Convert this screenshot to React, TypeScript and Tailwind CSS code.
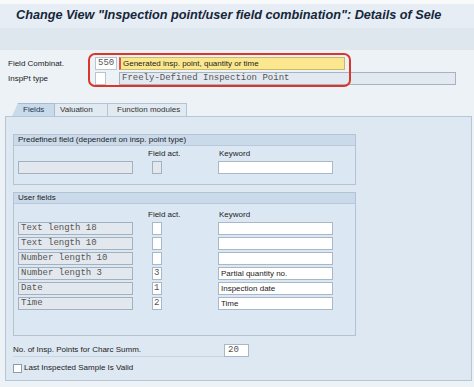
import React from "react";

const rows = [
  { name: "Text length 18", act: "", keyword: "" },
  { name: "Text length 10", act: "", keyword: "" },
  { name: "Number length 10", act: "", keyword: "" },
  { name: "Number length 3", act: "3", keyword: "Partial quantity no." },
  { name: "Date", act: "1", keyword: "Inspection date" },
  { name: "Time", act: "2", keyword: "Time" },
];

const mono = "font-['Liberation_Mono',monospace] text-[9px]";

const GreyBox = ({ text }: { text?: string }) => (
  <div className={`w-[115px] h-[13px] bg-[#e2e8ee] border border-[#a3b0bd] px-[2px] flex items-center text-[#555] ${mono}`}>
    {text}
  </div>
);

const ActBox = ({ value, grey }: { value?: string; grey?: boolean }) => (
  <div
    className={`w-[10px] h-[13px] border flex items-center pl-[1px] text-[#555] ${mono} ${
      grey ? "bg-[#e2e8ee] border-[#a3b0bd]" : "bg-white border-[#a9b7c6]"
    }`}
  >
    {value}
  </div>
);

const KeywordBox = ({ value }: { value?: string }) => (
  <div className="w-[115px] h-[13px] bg-white border border-[#a9b7c6] px-[2px] flex items-center text-[8px] text-[#222]">
    {value}
  </div>
);

const GroupBox = ({ title, children }: { title: string; children: React.ReactNode }) => (
  <div className="w-[343px] border border-[#b3c3d4] bg-[#dbe7f2]">
    <div className="h-[11px] bg-[#cbdaea] border-b border-[#b9c9da] pl-[4px] flex items-center text-[8px] text-[#222]">
      {title}
    </div>
    {children}
  </div>
);

const ColumnHeads = () => (
  <div className="flex h-[15px] items-center pl-[4px] text-[8px] text-[#222]">
    <div className="w-[130px]" />
    <div className="w-[71px]">Field act.</div>
    <div>Keyword</div>
  </div>
);

export default function App() {
  return (
    <div className="relative w-[474px] h-[387px] overflow-hidden bg-[#edf2f7] font-['Liberation_Sans',Arial,sans-serif] text-[#222]">
      <div className="h-[4px] bg-[#f7f9fb]" />
      <div className="h-[24px] bg-[#e6edf4] flex items-center pl-[16px]">
        <span className="text-[12.7px] font-bold italic text-[#15263a] whitespace-nowrap">
          Change View "Inspection point/user field combination": Details of Sele
        </span>
      </div>
      <div className="h-[22px] bg-[#dee6ee]" />

      {/* header fields */}
      <div className="mt-[7px] flex flex-col gap-[2px] text-[8px]">
        <div className="flex items-center h-[13px]">
          <div className="w-[95px] pl-[8px]">Field Combinat.</div>
          <div className={`w-[22px] h-[13px] bg-white border border-[#b8c4d0] flex items-center pl-[2px] text-[#555] ${mono}`}>
            550
          </div>
          <div className="ml-[2px] w-[226px] h-[13px] bg-[#fbe88e] border border-[#c9b96a] border-l-2 border-l-[#d8584a] pl-[2px] flex items-center text-[8px] text-[#222]">
            Generated insp. point, quantity or time
          </div>
        </div>
        <div className="flex items-center h-[13px]">
          <div className="w-[95px] pl-[8px]">InspPt type</div>
          <div className="w-[11px] h-[13px] bg-white border border-[#b8c4d0]" />
          <div className={`ml-[13px] w-[337px] h-[13px] bg-[#e2e9f1] border border-[#a7b3bf] pl-[2px] flex items-center text-[#555] ${mono}`}>
            Freely-Defined Inspection Point
          </div>
        </div>
      </div>

      {/* tabs */}
      <div className="mt-[18px] ml-[12px] flex h-[13px] items-end text-[8px]">
        <div className="w-[43px] h-[13px] bg-[#c9daeb] border-t border-r border-[#a9bccf] [clip-path:polygon(6px_0,100%_0,100%_100%,0_100%)] flex items-center pl-[11px] text-[#1d3550]">
          Fields
        </div>
        <div className="w-[53px] h-[13px] bg-[#e1e9f1] border-t border-r border-[#b4c4d4] flex items-center pl-[5px] text-[#333]">
          Valuation
        </div>
        <div className="w-[79px] h-[13px] bg-[#e1e9f1] border-t border-r border-[#b4c4d4] flex items-center pl-[9px] text-[#333]">
          Function modules
        </div>
      </div>

      {/* tab panel */}
      <div className="ml-[5px] w-[467px] h-[265px] bg-[#dde8f3] border border-[#b6c6d6] pt-[17px] pl-[7px] flex flex-col">
        <GroupBox title="Predefined field (dependent on insp. point type)">
          <ColumnHeads />
          <div className="flex items-center pl-[4px] h-[13px]">
            <GreyBox />
            <div className="ml-[19px]">
              <ActBox grey />
            </div>
            <div className="ml-[56px]">
              <KeywordBox />
            </div>
          </div>
          <div className="h-[10px]" />
        </GroupBox>

        <div className="h-[7px]" />

        <GroupBox title="User fields">
          <div className="h-[3px]" />
          <ColumnHeads />
          <div className="flex flex-col gap-[2px]">
            {rows.map((r) => (
              <div key={r.name} className="flex items-center pl-[4px] h-[13px]">
                <GreyBox text={r.name} />
                <div className="ml-[19px]">
                  <ActBox value={r.act} />
                </div>
                <div className="ml-[56px]">
                  <KeywordBox value={r.keyword} />
                </div>
              </div>
            ))}
          </div>
          <div className="h-[25px]" />
        </GroupBox>

        <div className="mt-[8px] flex items-center h-[13px] text-[8px]">
          <div className="w-[211px] h-[13px] border-b border-[#c8d4e0] flex items-center">
            No. of Insp. Points for Charc Summ.
          </div>
          <div className={`w-[25px] h-[13px] bg-white border border-[#a9b7c6] flex items-center pl-[3px] text-[#555] ${mono}`}>
            20
          </div>
        </div>
        <div className="mt-[5px] flex items-center text-[8px]">
          <div className="w-[9px] h-[9px] bg-white border border-[#8e9dac]" />
          <span className="ml-[2px]">Last Inspected Sample Is Valid</span>
        </div>
      </div>

      {/* red highlight annotation */}
      <div className="absolute left-[88px] top-[53px] w-[263px] h-[34px] border-2 border-[#d9362c] rounded-[7px] pointer-events-none" />
    </div>
  );
}
